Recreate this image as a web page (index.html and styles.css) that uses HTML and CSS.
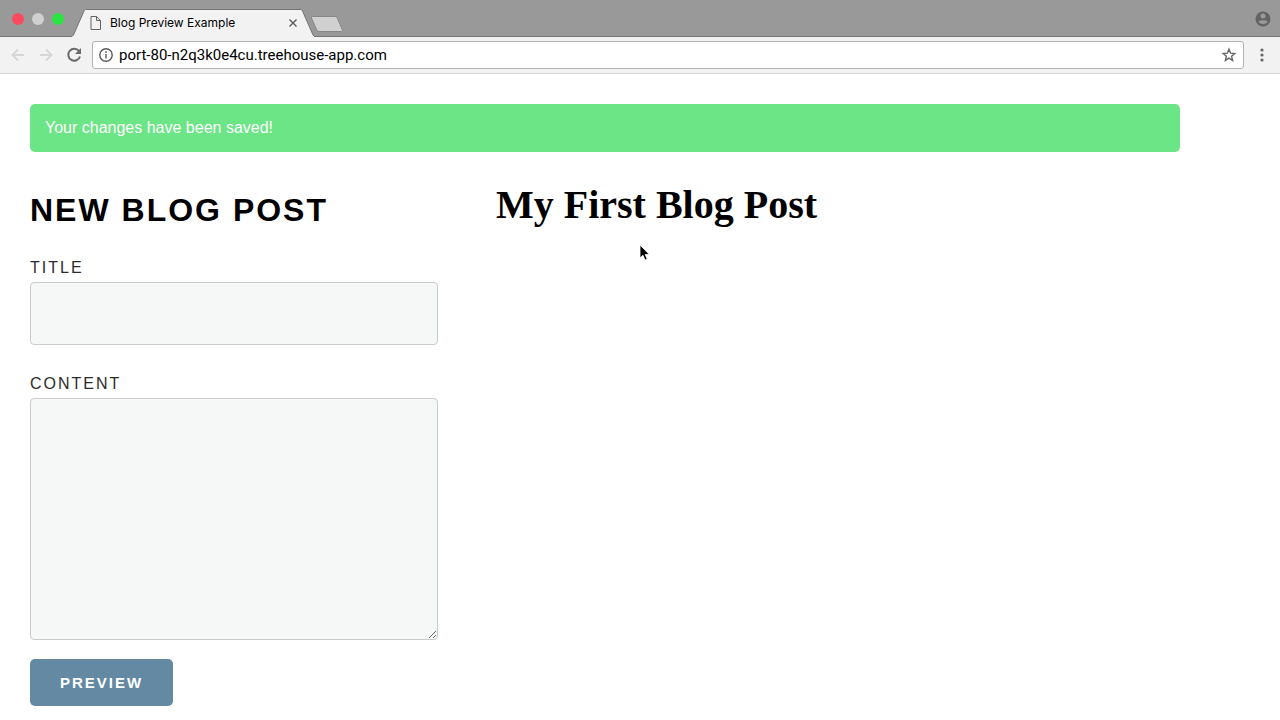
FILE: index.html
```html
<!DOCTYPE html>
<html lang="en">
<head>
    <meta charset="UTF-8">
    <meta name="viewport" content="width=device-width, initial-scale=1.0">
    <title>Blog Preview Example</title>
    <link rel="stylesheet" href="styles.css">
</head>
<body>
    <!-- Browser window -->
    <header class="browser">
        <div class="tab-strip">
            <div class="window-controls">
                <span class="dot red"></span>
                <span class="dot gray"></span>
                <span class="dot green"></span>
            </div>
            <div class="tab">
                <svg class="tab-shape" viewBox="0 0 244 28">
                    <path d="M0 28V27.500L1.500 26L12 2C12.500 .8 13 .5 14.500 .5H228C229.500 .5 230 .8 230.500 2L241 26L242.500 27.500V28Z" fill="#f2f2f2"/>
                    <path d="M0 27.500L1.500 26L12 2C12.500 .8 13 .5 14.500 .5H228C229.500 .5 230 .8 230.500 2L241 26L242.500 27.500" fill="none" stroke="#747474"/>
                </svg>
                <svg class="file-icon" width="12" height="14" viewBox="0 0 12 14" fill="none" stroke="#636363">
                    <path d="M1 .5H6.500L10.500 4.500V13.500H1ZM6.500 .5V4.500H10.500"/>
                </svg>
                <span class="tab-title">Blog Preview Example</span>
                <button class="icon-button" type="button" aria-label="Close tab">
                    <svg width="10" height="10" viewBox="0 0 10 10" stroke="#5a5a5a" stroke-width="1.400">
                        <path d="M1.500 1.500L8.500 8.500M8.500 1.500L1.500 8.500"/>
                    </svg>
                </button>
            </div>
            <button class="icon-button new-tab" type="button" aria-label="New tab">
                <svg width="34" height="16" viewBox="0 0 34 16">
                    <path d="M2.500 .5H25Q26.500 .5 27.500 2.500L32.500 14Q33 15.500 31.500 15.500H9Q7.500 15.500 6.500 13.500L1.500 2Q1 .5 2.500 .5Z" fill="#d0d0d0" stroke="#868686"/>
                </svg>
            </button>
            <button class="icon-button profile" type="button" aria-label="Profile">
                <svg width="16" height="16" viewBox="0 0 16 16">
                    <circle cx="8" cy="8" r="7.500" fill="#636363"/>
                    <circle cx="8" cy="5" r="2.500" fill="#999"/>
                    <path d="M3.500 11C3.500 8.500 12.500 8.500 12.500 11C11 13.500 5 13.500 3.500 11Z" fill="#999"/>
                </svg>
            </button>
        </div>
        <div class="toolbar">
            <button class="icon-button" type="button" aria-label="Back">
                <svg width="16" height="16" viewBox="0 0 16 16" fill="none" stroke="#d6d6d6" stroke-width="1.800">
                    <path d="M14 8H3M8 2.500L2.500 8L8 13.500"/>
                </svg>
            </button>
            <button class="icon-button" type="button" aria-label="Forward">
                <svg width="16" height="16" viewBox="0 0 16 16" fill="none" stroke="#d6d6d6" stroke-width="1.800">
                    <path d="M2 8H13M8 2.500L13.500 8L8 13.500"/>
                </svg>
            </button>
            <button class="icon-button" type="button" aria-label="Reload">
                <svg width="16" height="16" viewBox="0 0 16 16">
                    <path d="M13 4A6 6 0 1 0 14 9.500" fill="none" stroke="#6a6a6a" stroke-width="2"/>
                    <path d="M15 1V7H9Z" fill="#6a6a6a"/>
                </svg>
            </button>
            <div class="address-bar">
                <svg width="14" height="14" viewBox="0 0 14 14" fill="none" stroke="#5a5a5a" stroke-width="1.400">
                    <circle cx="7" cy="7" r="6.200"/>
                    <path d="M7 6V10.500M7 3.300V5"/>
                </svg>
                <input type="text" class="address" aria-label="Address" value="port-80-n2q3k0e4cu.treehouse-app.com">
                <button class="icon-button" type="button" aria-label="Bookmark this page">
                    <svg width="16" height="16" viewBox="0 0 16 16" fill="none" stroke="#666" stroke-width="1.400">
                        <path d="M8 2.200L9.600 6.200L13.800 6.500L10.600 9.200L11.600 13.400L8 11.100L4.400 13.400L5.400 9.200L2.200 6.500L6.400 6.200Z"/>
                    </svg>
                </button>
            </div>
            <button class="icon-button" type="button" aria-label="Menu">
                <svg width="4" height="14" viewBox="0 0 4 14" fill="#666">
                    <circle cx="2" cy="2" r="1.600"/>
                    <circle cx="2" cy="7" r="1.600"/>
                    <circle cx="2" cy="12" r="1.600"/>
                </svg>
            </button>
        </div>
    </header>

    <!-- Page -->
    <main class="container">
        <div class="alert" role="status">Your changes have been saved!</div>

        <div class="columns">
            <form class="post-form">
                <h1>New Blog Post</h1>
                <label for="title">Title</label>
                <input type="text" id="title" name="title">
                <label for="content">Content</label>
                <textarea id="content" name="content"></textarea>
                <button type="submit" class="preview-button">Preview</button>
            </form>

            <article class="preview">
                <h1>My First Blog Post</h1>
            </article>
        </div>
    </main>

    <!-- Mouse pointer -->
    <svg class="cursor" width="12" height="18" viewBox="0 0 12 18">
        <path d="M1 1V14L4 11.300L6 16L8.200 15L6.200 10.500H10.300Z" fill="#000" stroke="#fff" stroke-width=".8"/>
    </svg>
</body>
</html>
```
FILE: styles.css
```css
* {
    box-sizing: border-box;
}

body {
    margin: 0;
    background: #fff;
    font-family: "Liberation Sans", Arial, sans-serif;
    font-size: 16px;
}

/* Browser window */
.browser {
    font-family: Roboto, sans-serif;
    color: #000;
}

.tab-strip {
    display: flex;
    align-items: flex-end;
    height: 37px;
    padding: 0 9px 0 12px;
    background: #999;
    border-bottom: 1px solid #747474;
}

.window-controls {
    display: flex;
    gap: 8px;
    width: 60px;
    padding-bottom: 11px;
}

.dot {
    width: 12px;
    height: 12px;
    border-radius: 50%;
}

.red {
    background: #fc4a60;
}

.gray {
    background: #d0d0d0;
}

.green {
    background: #2be444;
}

.tab {
    position: relative;
    display: flex;
    align-items: center;
    width: 244px;
    height: 28px;
    padding: 0 18px;
    margin-bottom: -1px;
}

.tab-shape {
    position: absolute;
    top: 0;
    left: 0;
    width: 244px;
    height: 28px;
}

.file-icon,
.tab-title,
.tab .icon-button {
    position: relative;
}

.tab-title {
    flex: 1;
    margin-left: 8px;
    font-family: Inter, sans-serif;
    font-size: 12px;
    line-height: 14px;
    white-space: nowrap;
}

.icon-button {
    display: flex;
    padding: 0;
    border: none;
    background: none;
    cursor: pointer;
}

.new-tab {
    margin: 0 0 4px -6px;
}

.profile {
    margin: 0 0 9px auto;
}

.toolbar {
    display: flex;
    align-items: center;
    gap: 12px;
    height: 37px;
    padding: 0 16px 0 10px;
    background: #f2f2f2;
    border-bottom: 1px solid #d4d4d4;
}

.address-bar {
    display: flex;
    flex: 1;
    align-items: center;
    height: 28px;
    margin: 0 4px 0 -2px;
    padding: 0 6px;
    background: #fff;
    border: 1px solid #b4b4b4;
    border-radius: 3px;
}

.address {
    flex: 1;
    padding: 0 6px;
    border: none;
    outline: none;
    background: none;
    color: #000;
    font-family: Roboto, sans-serif;
    font-size: 15px;
}

/* Page layout */
.container {
    max-width: 1210px;
    padding: 30px 30px 14px;
}

.alert {
    padding: 15px;
    border-radius: 5px;
    background: #6be585;
    color: #fff;
    line-height: 18px;
}

.columns {
    display: grid;
    grid-template-columns: 408px 1fr;
    gap: 58px;
}

/* Form */
.post-form h1 {
    margin: 40px 0 31px;
    font-size: 32px;
    line-height: 36px;
    letter-spacing: 2px;
    text-transform: uppercase;
}

label {
    display: block;
    margin-bottom: 5px;
    color: #2b2b2b;
    line-height: 18px;
    letter-spacing: 2px;
    text-transform: uppercase;
}

.post-form input,
.post-form textarea {
    display: block;
    width: 100%;
    padding: 15px;
    border: 1px solid #c8cccc;
    border-radius: 4px;
    background: #f6f8f8;
    font-family: inherit;
    font-size: 16px;
}

.post-form input {
    height: 63px;
    margin-bottom: 30px;
}

.post-form textarea {
    height: 242px;
    margin-bottom: 19px;
    resize: vertical;
}

.preview-button {
    padding: 15px 30px;
    border: none;
    border-radius: 5px;
    background: #6389a3;
    color: #fff;
    font-family: inherit;
    font-size: 15px;
    font-weight: bold;
    line-height: 17px;
    letter-spacing: 2px;
    text-transform: uppercase;
    cursor: pointer;
}

/* Preview */
.preview h1 {
    margin: 30px 0;
    font-family: "Liberation Serif", "Times New Roman", serif;
    font-size: 40px;
    line-height: 46px;
}

.cursor {
    position: absolute;
    top: 244px;
    left: 639px;
}
```
